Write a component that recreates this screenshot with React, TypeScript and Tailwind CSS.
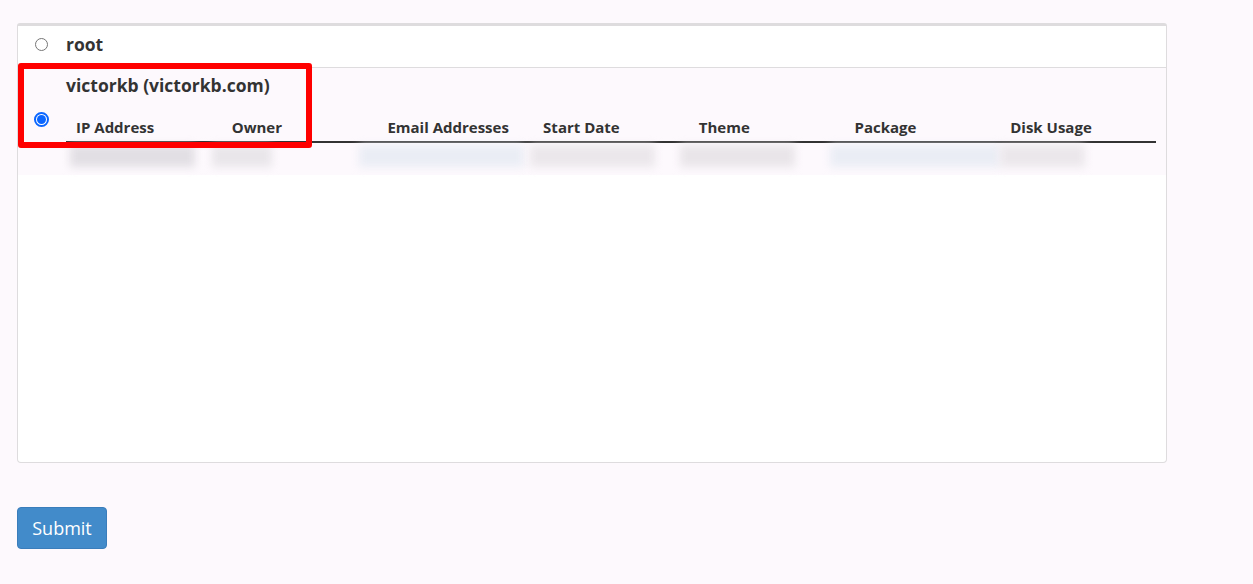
import React from 'react'

const headers = ['IP Address', 'Owner', 'Email Addresses', 'Start Date', 'Theme', 'Package', 'Disk Usage']

// blurred placeholders for the redacted data row
const blurred = [
  { w: 'w-[125px]', c: 'bg-[#e2dfe4]', ml: 'ml-[4px]' },
  { w: 'w-[60px]', c: 'bg-[#e9e6ea]', ml: 'ml-[-10px]' },
  { w: 'w-[165px]', c: 'bg-[#eaedf5]', ml: 'ml-[-18px]' },
  { w: 'w-[125px]', c: 'bg-[#ebe7eb]', ml: 'ml-[-3px]' },
  { w: 'w-[115px]', c: 'bg-[#e9e5e9]', ml: 'ml-[-9px]' },
  { w: 'w-[170px]', c: 'bg-[#eaedf5]', ml: 'ml-[-15px]' },
  { w: 'w-[85px]', c: 'bg-[#ebe7eb]', ml: 'ml-[0px]' },
]

export default function App() {
  return (
    <div className="min-h-[584px] w-full bg-[#fdf9fd] pt-[23px] pl-[17px] font-['Open_Sans',sans-serif] text-[#333]">
      <div className="relative w-[1150px]">
        {/* Account list panel */}
        <div className="h-[440px] w-[1150px] overflow-hidden rounded-t-[3px] rounded-b-[4px] border border-t-[3px] border-[#dedcde] bg-white">
          {/* root row */}
          <label className="flex h-[42px] items-center border-b border-[#dedcde] bg-white pb-[4px]">
            <span className="ml-[17px] h-[13px] w-[13px] rounded-full border border-[#767676] bg-white" />
            <span className="ml-[18px] text-[17.5px] font-bold leading-none">root</span>
          </label>

          {/* victorkb row */}
          <div className="flex bg-[#fdf9fd] pb-[8px]">
            <div className="flex w-[48px] shrink-0 pt-[44px] pl-[16px]">
              <span className="flex h-[15px] w-[15px] items-center justify-center rounded-full border-[2px] border-[#0a66ff] bg-white">
                <span className="h-[9px] w-[9px] rounded-full bg-[#0a66ff]" />
              </span>
            </div>
            <div className="w-[1090px]">
              <div className="pt-[7px] text-[17.5px] font-bold leading-[20px]">victorkb (victorkb.com)</div>
              <table className="mt-[22px] w-[1090px] table-fixed border-collapse">
                <thead>
                  <tr className="border-b-[2px] border-[#333]">
                    {headers.map((h) => (
                      <th key={h} className="pb-[4px] pl-[10px] text-left text-[15px] font-bold leading-[20px] text-[#333]">
                        {h}
                      </th>
                    ))}
                  </tr>
                </thead>
                <tbody>
                  <tr>
                    {blurred.map((b, i) => (
                      <td key={i} className="h-[25px] pt-[2px]">
                        <div className={`h-[22px] ${b.w} ${b.c} ${b.ml} blur-[4px]`} />
                      </td>
                    ))}
                  </tr>
                </tbody>
              </table>
            </div>
          </div>
        </div>

        {/* annotation highlight */}
        <div className="pointer-events-none absolute left-[1px] top-[40px] h-[85px] w-[294px] rounded-[3px] border-[6px] border-[#ff0000]" />

        <button className="mt-[44px] h-[42px] w-[90px] rounded-[4px] border border-[#3a7dbb] bg-[#428bca] text-[18px] text-white">
          Submit
        </button>
      </div>
    </div>
  )
}
